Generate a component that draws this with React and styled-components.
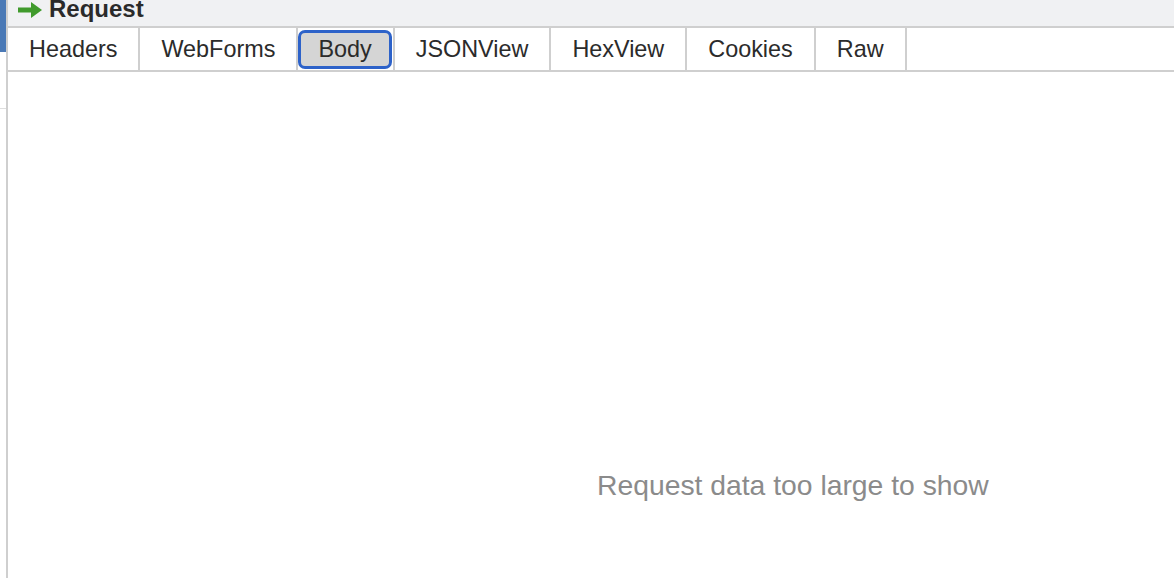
import React from "react";
import styled, { createGlobalStyle } from "styled-components";

const GlobalStyle = createGlobalStyle`
  html, body {
    margin: 0;
    padding: 0;
    background: #fff;
    overflow: hidden;
  }
  body {
    font-family: "Liberation Sans", Arial, sans-serif;
  }
`;

const Page = styled.div`
  display: flex;
  width: 1174px;
  height: 578px;
  overflow: hidden;
`;

const SideStrip = styled.div`
  width: 6px;
  flex-shrink: 0;
  border-right: 2px solid #cfcfcf;
  display: flex;
  flex-direction: column;
`;

const SideBlue = styled.div`
  height: 52px;
  background-color: #4a79b6;
`;

const SideGap = styled.div`
  height: 56px;
  border-bottom: 1px solid #dedede;
`;

const Panel = styled.div`
  flex: 1;
  display: flex;
  flex-direction: column;
  min-width: 0;
`;

const Header = styled.div`
  height: 26px;
  background-color: #f0f1f3;
  border-bottom: 2px solid #cfcfcf;
  display: flex;
  align-items: flex-start;
  gap: 7px;
  padding-left: 10px;
  overflow: hidden;
`;

const Title = styled.span`
  font-size: 24px;
  line-height: 24px;
  font-weight: bold;
  color: #2a2a2a;
  margin-top: -3px;
`;

const ArrowIcon = styled.svg`
  margin-top: 2px;
  flex-shrink: 0;
`;

const TabBar = styled.div`
  display: flex;
  height: 42px;
  border-bottom: 2px solid #cfcfcf;
`;

const Tab = styled.div`
  display: flex;
  padding: 2px 1px 1px 1px;
  border-right: 2px solid #cfcfcf;
`;

const TabLabel = styled.div`
  display: flex;
  align-items: center;
  padding: 0 ${(props) => (props.selected ? "17px" : "20px")};
  font-size: 23.4px;
  color: #2b2b2b;
  border-radius: 7px;
  background-color: ${(props) => (props.selected ? "#d5d5d5" : "transparent")};
  border: ${(props) => (props.selected ? "3px solid #2d62c9" : "none")};
  margin-left: ${(props) => (props.selected ? "-1px" : "0")};
`;

const Content = styled.div`
  flex: 1;
  display: flex;
  align-items: flex-start;
  padding-top: 397px;
  padding-left: 589px;
`;

const Message = styled.div`
  font-size: 28.3px;
  color: #8b8b8b;
  white-space: nowrap;
`;

const tabs = ["Headers", "WebForms", "Body", "JSONView", "HexView", "Cookies", "Raw"];

export default function App() {
  return (
    <Page>
      <GlobalStyle />
      <SideStrip>
        <SideBlue />
        <SideGap />
      </SideStrip>
      <Panel>
        <Header>
          <ArrowIcon width="24" height="16" viewBox="0 0 24 16">
            <path d="M0 5.5 H13 V0 L24 8 L13 16 V10.5 H0 Z" fill="#3f9a2c" />
          </ArrowIcon>
          <Title>Request</Title>
        </Header>
        <TabBar>
          {tabs.map((t) => (
            <Tab key={t}>
              <TabLabel selected={t === "Body"}>{t}</TabLabel>
            </Tab>
          ))}
        </TabBar>
        <Content>
          <Message>Request data too large to show</Message>
        </Content>
      </Panel>
    </Page>
  );
}
